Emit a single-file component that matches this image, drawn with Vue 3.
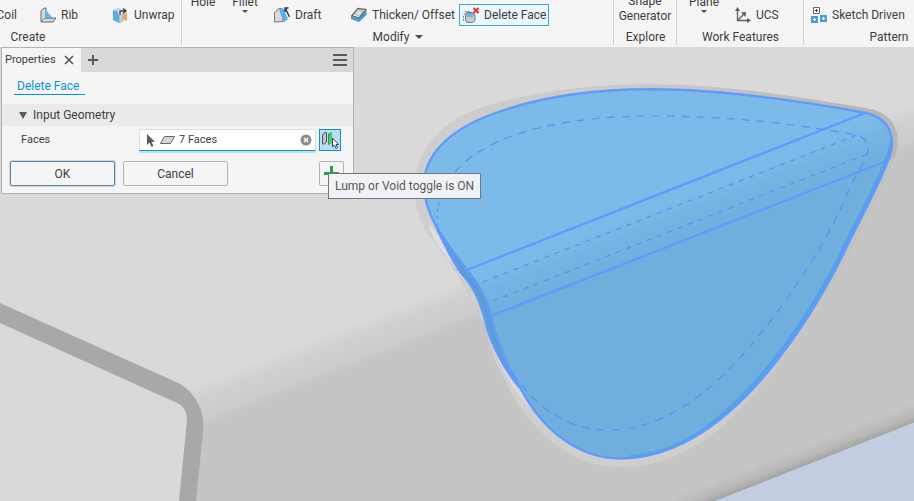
<script setup>
import { ref } from 'vue'

const lumpMode = ref(true)
const selection = ref('7 Faces')

// Outlines of the modelled pocket, shared by fills, strokes and clips.
const face = 'M865 112.700C790 99 715 89.300 650 89.300C590 89.300 535 98 490 115C450 130 424 155 424 185C424 215 444 240 467 270C480 285 487 298 491 316C496 342 508 368 523 393C545 432 580 458.500 620 458.500C675 458.500 725 423 767 373C800 333 828 287 850 240C866 208 881 180 888 160C897 140 891 118 865 112.700Z'
const groove = 'M870 109C790 95 720 84.500 650 84.500C585 84.500 520 94 475 110C435 126 415 155 415 187C415 210 421 225 432 239C450 262 475 300 488 333C491 352 497 366 503 377C512 395 521 411 533 423C560 455 590 467 620 467C680 467 727 430 767 380C802 336 832 289 860 233C875 203 886 180 893 160C904 138 896 114 870 109Z'
const farEdge = 'M455 172C490 132 565 116 655 116C725 116 790 123 857 135C864 137 868 142 868 148C868 158 860 166 848 192C827 243 785 307 740 358C700 402 655 430 610 430C570 430 540 412 512 373'
const sideWall = 'M437 228C443 242 450 258 463 275C475 288 482 305 487 328C494 350 505 370 519 387'
const lowerRim = 'M630 456.500C679 454.500 723 421 765 371C798 331 826 286 848 239C864 207 879 180 886 160C889 154 891 148 891 142'
</script>

<template>
  <div class="app">
    <header class="ribbon">
      <section class="group create">
        <div class="tools">
          <button class="tool coil">Coil</button>
          <button class="tool rib">
            <svg class="icon" viewBox="0 0 16 16"><path d="M1 15V4l3-3h2v6l6 4h4l-3 4z" fill="#d9d9d9" stroke="#6a6a6a" /><path d="M5 2v9.500h8z" fill="#62b4ed" /><path d="M1 15l3-3.500h9" fill="none" stroke="#888" /></svg>
            Rib
          </button>
          <button class="tool unwrap">
            <svg class="icon" viewBox="0 0 16 16"><path d="M0 3l6 2v11l-6-3z" fill="#57aee8" /><path d="M0 3l5-2 5 1-4 3z" fill="#a6d5f4" /><path d="M6 5h4v9l-4 2z" fill="#c9cdd0" stroke="#929699" stroke-width=".6" /><path d="M11 1l3 1v12l-4-2V5z" fill="#e8a06f" /><path d="M7 8V4h5M10 1.500L13 4l-3 2.500" fill="none" stroke="#fff" stroke-width="3" /><path d="M7 8V4h5M10 1.500L13 4l-3 2.500" fill="none" stroke="#333" stroke-width="1.300" /></svg>
            Unwrap
          </button>
        </div>
        <h2 class="title">Create</h2>
      </section>

      <section class="group modify">
        <div class="tools">
          <button class="big"><span>Hole</span><i class="blank"></i></button>
          <button class="big"><span>Fillet</span><i class="caret small"></i></button>
          <button class="tool draft">
            <svg class="icon" viewBox="0 0 16 16"><path d="M.500 15V6l4-4.500h3L9 14.500z" fill="#dadada" stroke="#777" /><path d="M5 3l4-2 5 11-4 3.500z" fill="#5bb0eb" /><path d="M15.500 10L11.500 1.500M11 5V1h3.500" fill="none" stroke="#333" stroke-width="1.400" /></svg>
            Draft
          </button>
          <button class="tool thicken">
            <svg class="icon" viewBox="0 0 16 16"><path d="M0 8l6 3 9.500-8v5L8 15l-8-3z" fill="#419fdd" /><path d="M1 8.500l6-7 8 1-7 8.500z" fill="#fff" stroke="#666" stroke-width="1.300" /><path d="M4 7.500l4-4 4 .500-4 4.500z" fill="#ededed" stroke="#8c8c8c" stroke-width=".8" /></svg>
            Thicken/ Offset
          </button>
          <button class="tool active">
            <svg class="icon" viewBox="0 0 16 16"><path d="M2.500 8l1-2.500h6L12 8v5l-2 2.500H4L2.500 13z" fill="#c8cacc" stroke="#777" /><path d="M.500 14V9l2-4.500h5" fill="none" stroke="#888" stroke-dasharray="2 1" /><path d="M4 6h5.500l1 2-1 2H3.500z" fill="#62b3ea" /><path d="M10.500 1l5 5m0-5l-5 5" stroke="#ee2c2c" stroke-width="2" /></svg>
            Delete Face
          </button>
        </div>
        <h2 class="title">Modify <i class="caret"></i></h2>
      </section>

      <section class="group explore">
        <div class="tools"><button class="big"><span>Shape<br>Generator</span></button></div>
        <h2 class="title">Explore</h2>
      </section>

      <section class="group work">
        <div class="tools">
          <button class="big"><span>Plane</span><i class="caret small"></i></button>
          <button class="tool">
            <svg class="icon" viewBox="0 0 16 16" fill="none" stroke="#5c5c5c" stroke-width="1.300"><path d="M2.500 2v11.500H14M2.500 13.500l7-7" /><path d="M0 4l2.500-4L5 4zM12 11l4 2.500-4 2.500zM6 5.500l5-.500-.500 5z" fill="#5c5c5c" stroke="none" /></svg>
            UCS
          </button>
        </div>
        <h2 class="title">Work Features</h2>
      </section>

      <section class="group pattern">
        <div class="tools">
          <button class="tool">
            <svg class="icon" viewBox="0 0 16 16"><path d="M2.500.500h6v6h-6z" fill="#fff" stroke="#666" /><path d="M5.500 2v3M4 3.500h3" stroke="#444" /><path d="M0 9h7v7H0zM9 8h7v7H9z" fill="#4a9fdb" /><path d="M3.500 11v3M2 12.500h3M12.500 10v3M11 11.500h3" stroke="#fff" /></svg>
            Sketch Driven
          </button>
        </div>
        <h2 class="title">Pattern</h2>
      </section>
    </header>

    <main class="viewport">
      <svg class="scene" viewBox="0 47 914 454" preserveAspectRatio="xMinYMin slice" aria-hidden="true">
        <defs>
          <linearGradient id="body" gradientUnits="userSpaceOnUse" x1="400" y1="304" x2="509.500" y2="583.300">
            <stop offset="0" stop-color="#d9d9d9" />
            <stop offset=".05" stop-color="#d1d1d1" />
            <stop offset=".12" stop-color="#cbcbcb" />
            <stop offset=".14" stop-color="#c5c5c5" />
            <stop offset=".93" stop-color="#c5c5c5" />
            <stop offset=".97" stop-color="#b9b9b8" />
            <stop offset="1" stop-color="#9d9d9b" />
          </linearGradient>
          <linearGradient id="selected" gradientUnits="userSpaceOnUse" x1="467" y1="270" x2="485.600" y2="317.500">
            <stop offset="0" stop-color="#7cbbe9" />
            <stop offset=".25" stop-color="#7abae8" />
            <stop offset=".55" stop-color="#75b3e2" />
            <stop offset="1" stop-color="#70aedd" />
          </linearGradient>
          <linearGradient id="rim" gradientUnits="userSpaceOnUse" x1="420" y1="240" x2="860" y2="120">
            <stop offset="0" stop-color="#cfcfcf" />
            <stop offset=".6" stop-color="#c8c8c8" />
            <stop offset="1" stop-color="#b7b7b7" />
          </linearGradient>
          <linearGradient id="rimFade" gradientUnits="userSpaceOnUse" x1="740" y1="470" x2="840" y2="270">
            <stop offset="0" stop-color="#cfcfcf" />
            <stop offset="1" stop-color="#c1c1c1" />
          </linearGradient>
          <clipPath id="upper"><path d="M380 47H914V150L488 320L430 240L380 300z" /></clipPath>
        </defs>
        <path d="M0 47H914V501H0z" fill="url(#body)" />
        <path d="M715 501L914 422.500V501z" fill="#c2cde0" />
        <path d="M0 303L176 382C191 388 204 407 203.500 426L196 501H0z" fill="#a8a8a8" />
        <path d="M0 323L177 403C184 406 187 412 187 420L179 501H0z" fill="#d9d9d9" />

        <path :d="groove" fill="url(#rimFade)" />
        <path :d="groove" fill="url(#rim)" clip-path="url(#upper)" />
        <path d="M428 222Q431 240 452 263L445 245z" fill="#dedede" />
        <path d="M487 330Q500 374 526 404L540 417L511 368z" fill="#dadada" />
        <path :d="face" fill="url(#selected)" />
        <path d="M437 228C446 245 455 255 467 270C480 285 487 298 491 316C495 340 503 360 519 387C505 370 494 350 487 328C482 305 475 288 463 275C450 258 443 242 437 228z" fill="#5c9fce" />
        <path :d="lowerRim" fill="none" stroke="#50a3e8" stroke-width="3" />
        <g fill="none" stroke="#6199fd" stroke-width="2.400">
          <path :d="face" />
          <path :d="sideWall" />
          <path d="M467 270L865 113M491 316L889 160" />
        </g>
        <g fill="none" stroke="#4698f7" stroke-width="1.200">
          <path :d="farEdge" stroke-dasharray="8 7" />
          <path d="M483 282L857 135M493 301L865 155" stroke-dasharray="5 6" />
          <path d="M439 233Q435 215 440 198" stroke-dasharray="3 4" />
          <path d="M457 269L475 288" stroke-dasharray="2 2" />
        </g>
      </svg>

      <form class="panel" @submit.prevent>
        <div class="tabbar">
          <div class="tab">
            Properties
            <button type="button" class="glyph close" aria-label="Close">
              <svg viewBox="0 0 12 12"><path d="M2 2l8 8m0-8l-8 8" stroke="#5a5a5a" stroke-width="1.700" /></svg>
            </button>
          </div>
          <button type="button" class="glyph add" aria-label="Add tab">
            <svg viewBox="0 0 12 12"><path d="M6 1v10M1 6h10" stroke="#5a5a5a" stroke-width="2" /></svg>
          </button>
          <button type="button" class="glyph menu" aria-label="Menu">
            <svg viewBox="0 0 14 14"><path d="M0 2h14M0 7h14M0 12h14" stroke="#5a5a5a" stroke-width="2" /></svg>
          </button>
        </div>

        <div class="crumb"><a href="#">Delete Face</a></div>
        <h3 class="section"><svg viewBox="0 0 8 8"><path d="M0 1h8L4 8z" fill="#5a5a5a" /></svg>Input Geometry</h3>

        <div class="field">
          <label for="faces">Faces</label>
          <div class="picker">
            <svg class="cursor" viewBox="0 0 9 13"><path d="M1 0v11l2.500-2.500L5.500 13l2-1-2-4H9z" fill="#5c5c5c" /></svg>
            <svg class="plane" viewBox="0 0 15 8"><path d="M4.500.500h10l-4 7H.500z" fill="#d6d6d6" stroke="#666" /></svg>
            <input id="faces" v-model="selection" readonly>
            <button type="button" class="glyph clear" aria-label="Clear">
              <svg viewBox="0 0 12 12"><circle cx="6" cy="6" r="5.500" fill="#8c8c8c" /><path d="M4 4l4 4m0-4l-4 4" stroke="#fff" stroke-width="1.500" /></svg>
            </button>
          </div>
          <div class="toggle-wrap">
            <button type="button" class="toggle" :aria-pressed="lumpMode" aria-label="Lump or Void" aria-describedby="tip" @click="lumpMode = !lumpMode">
              <svg viewBox="0 0 18 18"><path d="M1.500 13V4l2-2.500h2V11l-2 2z" fill="#bfc3c5" stroke="#555" /><path d="M7 3l3-2v11l-3 2z" fill="#239a4b" /><path d="M8 3l3-2v11l-3 2z" fill="#4dc77d" /><path d="M11.500 7v9l2-2 1.500 3.500 1.500-1L15 13.500h2.500z" fill="#fff" stroke="#333" stroke-width=".9" /></svg>
            </button>
            <div id="tip" class="tooltip" role="tooltip">Lump or Void toggle is {{ lumpMode ? 'ON' : 'OFF' }}</div>
          </div>
        </div>

        <div class="actions">
          <button type="submit" class="btn ok">OK</button>
          <button type="button" class="btn">Cancel</button>
          <button type="button" class="btn apply" aria-label="Apply and create new">
            <svg viewBox="0 0 15 15"><path d="M7.500 0v15M0 7.500h15" stroke="#21a34b" stroke-width="3" /></svg>
          </button>
        </div>
      </form>
    </main>
  </div>
</template>

<style>
body {
  margin: 0;
}
</style>

<style scoped>
* {
  box-sizing: border-box;
}
.app {
  display: flex;
  flex-direction: column;
  min-height: 100vh;
  font: 12px/16px Roboto, "Open Sans", sans-serif;
  color: #3d3d3d;
  overflow: hidden;
}
button {
  margin: 0;
  padding: 0;
  border: 0;
  background: none;
  font: inherit;
  color: inherit;
}
svg {
  display: block;
}
.ribbon {
  display: flex;
  padding-top: 4px;
  background: #f5f5f5;
  overflow: hidden;
}
.group {
  display: flex;
  flex: none;
  flex-direction: column;
  position: relative;
}
.group::after {
  content: "";
  position: absolute;
  right: 0;
  top: -4px;
  bottom: 2px;
  width: 1px;
  background: #d2d2d2;
}
.create {
  width: 308px;
  margin-left: -126px;
}
.create .tools {
  justify-content: flex-end;
}
.modify {
  width: 432px;
}
.explore {
  width: 63px;
}
.work {
  width: 127px;
}
.pattern {
  width: 170px;
}
.pattern .tools {
  padding-left: 3px;
}
.tools {
  display: flex;
  align-items: flex-end;
  height: 22px;
}
.tool {
  display: flex;
  align-items: center;
  gap: 5px;
  height: 22px;
  padding: 0 4px;
  white-space: nowrap;
}
.icon {
  width: 16px;
  height: 16px;
  flex: none;
}
.coil {
  padding-right: 19px;
}
.rib,
.unwrap {
  width: 73px;
}
.draft {
  width: 77px;
  margin-left: 4px;
}
.thicken {
  width: 112px;
}
.active {
  width: 90px;
  border: 1px solid #35a9da;
  background: #ebf7fd;
  padding: 0 3px;
}
.big {
  display: flex;
  flex-direction: column;
  align-items: center;
  width: 42px;
  line-height: 15px;
}
.explore .big {
  width: 62px;
  padding-bottom: 2px;
}
.work .big {
  width: 54px;
}
.blank,
.caret {
  height: 4px;
}
.big i {
  margin-bottom: 12px;
}
.caret {
  display: inline-block;
  border: 4px solid transparent;
  border-top-color: #4c4c4c;
  border-bottom: 0;
}
.caret.small {
  border-width: 3px 3px 0;
}
.title {
  display: flex;
  align-items: center;
  justify-content: center;
  gap: 6px;
  height: 21px;
  margin: 0;
  font-size: 12px;
  font-weight: 400;
}
.viewport {
  position: relative;
  flex: 1;
}
.scene {
  position: absolute;
  inset: 0;
  width: 100%;
  height: 100%;
}
.panel {
  position: relative;
  width: 353px;
  margin-left: 1px;
  border: 1px solid #b2b2b2;
  background: #f5f5f5;
}
.tabbar {
  display: flex;
  align-items: center;
  height: 24px;
  background: #d9d9d9;
}
.tab {
  display: flex;
  align-items: center;
  justify-content: space-between;
  height: 24px;
  width: 79px;
  padding: 0 6px 0 3px;
  background: #f5f5f5;
  font-size: 11px;
}
.glyph svg {
  width: 12px;
  height: 12px;
}
.add {
  margin-left: 6px;
}
.menu {
  margin: 0 6px 0 auto;
}
.menu svg {
  width: 14px;
  height: 14px;
}
.crumb {
  height: 32px;
  padding: 6px 12px;
}
.crumb a {
  display: inline-block;
  padding: 0 6px 0 3px;
  border-bottom: 1px solid #0a94d6;
  color: #0a94d6;
  text-decoration: none;
}
.section {
  display: flex;
  align-items: center;
  gap: 6px;
  height: 22px;
  margin: 0;
  padding-left: 17px;
  background: #eaeaea;
  font-size: 12px;
  font-weight: 400;
}
.section svg {
  width: 8px;
  height: 8px;
}
.field {
  display: flex;
  align-items: center;
  margin: 3px 12px 0 19px;
  font-size: 11px;
}
.field label {
  flex: 1;
}
.picker {
  display: flex;
  align-items: center;
  width: 177px;
  height: 22px;
  padding: 0 3px 0 6px;
  border: 1px solid #dedede;
  border-bottom: 1px solid #0a94d6;
  background: #fff;
  box-shadow: 0 2px 0 #bfdfee;
}
.cursor {
  width: 9px;
  height: 13px;
}
.plane {
  width: 15px;
  height: 8px;
  margin: 0 4px 0 5px;
}
.picker input {
  flex: 1;
  min-width: 0;
  padding: 0;
  border: 0;
  outline: 0;
  background: none;
  color: inherit;
  font: inherit;
}
.toggle-wrap {
  position: relative;
  margin-left: 3px;
}
.toggle {
  display: block;
  width: 22px;
  height: 22px;
  padding: 1px;
  border: 1px solid #0a94d6;
  background: #b9ddf0;
}
.toggle svg {
  width: 18px;
  height: 18px;
}
.tooltip {
  position: absolute;
  left: 9px;
  top: 44px;
  z-index: 1;
  padding: 4px 6px;
  border: 1px solid #767676;
  background: #f1f2f7;
  color: #575757;
  font-size: 12px;
  white-space: nowrap;
}
.actions {
  display: flex;
  gap: 8px;
  padding: 10px 9px 7px 8px;
}
.btn {
  display: grid;
  place-items: center;
  width: 105px;
  height: 25px;
  border: 1px solid #b3b3b3;
  border-radius: 2px;
  background: #f5f5f5;
}
.ok {
  border-color: #6e7d86;
  box-shadow: 0 0 0 1px #b9ddf0;
}
.apply {
  width: 25px;
  margin-left: auto;
}
.apply svg {
  width: 15px;
  height: 15px;
}
</style>
